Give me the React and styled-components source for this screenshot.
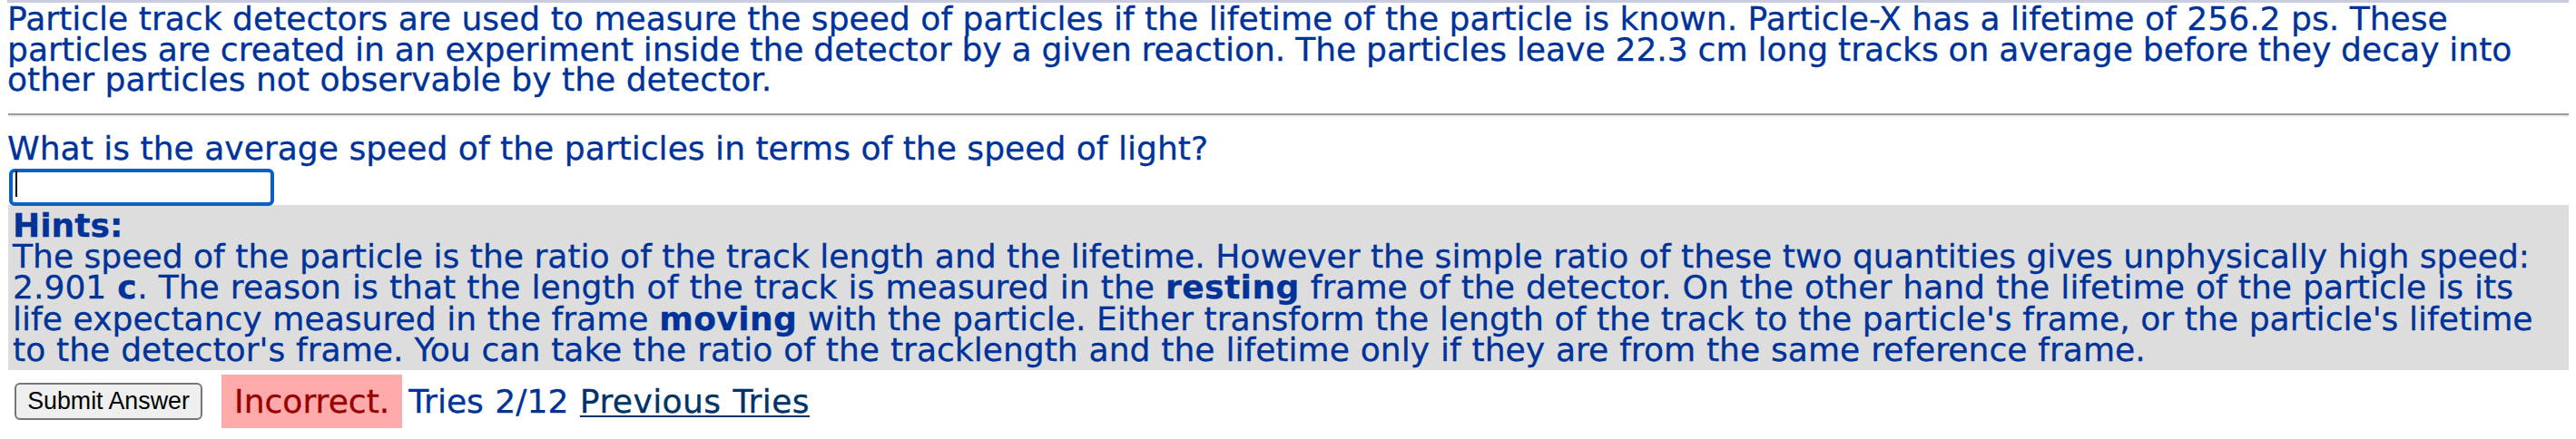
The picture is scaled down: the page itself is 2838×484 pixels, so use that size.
import React from "react";
import styled, { createGlobalStyle } from "styled-components";

const GlobalStyle = createGlobalStyle`
  html, body {
    margin: 0;
    padding: 0;
    background: #ffffff;
  }
  body {
    font-family: "DejaVu Sans", Verdana, sans-serif;
    color: #003399;
  }
`;

const Page = styled.div`
  padding: 0 8px;
  font-size: 36.1px;
  -webkit-text-stroke: 0.3px currentColor;
`;

const TopRule = styled.div`
  height: 3px;
  background: #cbcbdf;
`;

const Problem = styled.p`
  margin: 2.1px 0 0 0;
  line-height: 33.6px;
`;

const Line = styled.span`
  display: block;
  white-space: nowrap;
  word-spacing: ${(p) => p.$spacing || 0}px;
`;

const Rule = styled.div`
  margin: 19px 0 0 1px;
  border-top: 2px solid #9b9b9b;
  border-bottom: 2px solid #eeeeee;
`;

const Question = styled.div`
  margin-top: 18.3px;
  line-height: 34px;
`;

const AnswerField = styled.div`
  position: relative;
  width: 292px;
  height: 41px;
  margin: 1.7px 0 0 2px;
`;

const AnswerInput = styled.input`
  box-sizing: border-box;
  width: 100%;
  height: 100%;
  margin: 0;
  padding: 0 6px;
  border: 4px solid #0a60c8;
  border-radius: 6px;
  background: #ffffff;
  outline: none;
  font-family: "DejaVu Sans", Verdana, sans-serif;
  font-size: 26px;
  color: #000000;
`;

const Caret = styled.span`
  position: absolute;
  left: 7px;
  top: 5px;
  width: 2px;
  height: 29px;
  background: #000000;
`;

const HintBox = styled.div`
  margin: 1.8px 0 0 1px;
  padding: 6.4px 6px 5px 5px;
  background: #dddddd;
  line-height: 34.15px;
`;

const HintTitle = styled.div`
  font-weight: bold;
`;

const Strong = styled.b`
  font-weight: bold;
  letter-spacing: 0.4px;
`;

const StatusRow = styled.div`
  display: flex;
  align-items: center;
  margin-top: 5px;
  height: 59px;
`;

const SubmitButton = styled.button`
  box-sizing: border-box;
  width: 207px;
  height: 41px;
  margin: 0 0 0 8px;
  padding: 0 12px;
  background: #efefef;
  border: 2px solid #767676;
  border-radius: 6px;
  font-family: "Liberation Sans", Arial, sans-serif;
  font-size: 26.8px;
  color: #000000;
  -webkit-text-stroke: 0;
  white-space: nowrap;
`;

const Verdict = styled.span`
  margin-left: 21px;
  padding: 13.5px 14px 11.5px 14px;
  background: #ffaaaa;
  color: #990000;
  line-height: 34px;
  white-space: nowrap;
`;

const Tries = styled.span`
  margin: 2px 0 0 7px;
  line-height: 34px;
  white-space: pre;
  word-spacing: 1px;
`;

const PrevLink = styled.a`
  color: #003366;
  text-decoration: underline;
  text-decoration-thickness: 2px;
  text-underline-offset: 3px;
  cursor: pointer;
  letter-spacing: 0.4px;
`;

export default function App() {
  return (
    <>
      <GlobalStyle />
      <Page>
        <TopRule />
        <Problem>
          <Line>
            Particle track detectors are used to measure the speed of particles if the lifetime of the particle is known. Particle-X has a lifetime of 256.2 ps. These
          </Line>
          <Line $spacing={-0.65}>
            particles are created in an experiment inside the detector by a given reaction. The particles leave 22.3 cm long tracks on average before they decay into
          </Line>
          <Line>other particles not observable by the detector.</Line>
        </Problem>
        <Rule />
        <Question>What is the average speed of the particles in terms of the speed of light?</Question>
        <AnswerField>
          <AnswerInput type="text" readOnly defaultValue="" aria-label="answer" />
          <Caret />
        </AnswerField>
        <HintBox>
          <HintTitle>Hints:</HintTitle>
          <Line>
            The speed of the particle is the ratio of the track length and the lifetime. However the simple ratio of these two quantities gives unphysically high speed:
          </Line>
          <Line $spacing={0.6}>
            2.901 <Strong>c</Strong>. The reason is that the length of the track is measured in the <Strong>resting</Strong> frame of the detector. On the other hand the lifetime of the particle is its
          </Line>
          <Line $spacing={0.15}>
            life expectancy measured in the frame <Strong>moving</Strong> with the particle. Either transform the length of the track to the particle's frame, or the particle's lifetime
          </Line>
          <Line $spacing={0.4}>
            to the detector's frame. You can take the ratio of the tracklength and the lifetime only if they are from the same reference frame.
          </Line>
        </HintBox>
        <StatusRow>
          <SubmitButton type="button">Submit Answer</SubmitButton>
          <Verdict>Incorrect.</Verdict>
          <Tries>
            Tries 2/12 <PrevLink>Previous Tries</PrevLink>
          </Tries>
        </StatusRow>
      </Page>
    </>
  );
}
